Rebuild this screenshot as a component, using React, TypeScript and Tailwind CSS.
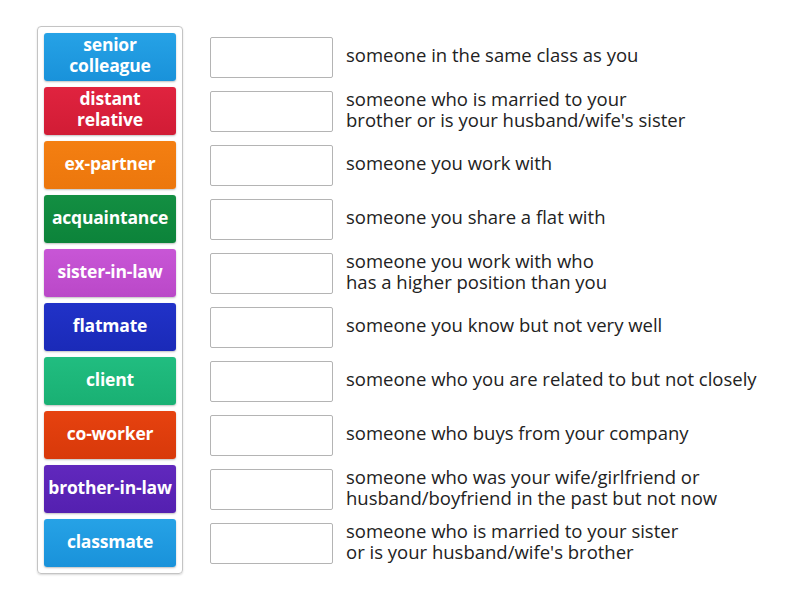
import React from "react";

const tiles: { label: string[]; cls: string }[] = [
  { label: ["senior", "colleague"], cls: "bg-gradient-to-b from-[#26a2e6] to-[#1992da]" },
  { label: ["distant", "relative"], cls: "bg-gradient-to-b from-[#e0233f] to-[#d11c35]" },
  { label: ["ex-partner"], cls: "bg-gradient-to-b from-[#f47f11] to-[#ec770d]" },
  { label: ["acquaintance"], cls: "bg-gradient-to-b from-[#138f42] to-[#0c833a]" },
  { label: ["sister-in-law"], cls: "bg-gradient-to-b from-[#c856d6] to-[#ba48c8]" },
  { label: ["flatmate"], cls: "bg-gradient-to-b from-[#2132c8] to-[#1a2ab8]" },
  { label: ["client"], cls: "bg-gradient-to-b from-[#21bd80] to-[#19b073]" },
  { label: ["co-worker"], cls: "bg-gradient-to-b from-[#e6420f] to-[#d8390a]" },
  { label: ["brother-in-law"], cls: "bg-gradient-to-b from-[#6128bd] to-[#5420b0]" },
  { label: ["classmate"], cls: "bg-gradient-to-b from-[#26a2e6] to-[#1992da]" },
];

const defs: string[][] = [
  ["someone in the same class as you"],
  ["someone who is married to your", "brother or is your husband/wife's sister"],
  ["someone you work with"],
  ["someone you share a flat with"],
  ["someone you work with who", "has a higher position than you"],
  ["someone you know but not very well"],
  ["someone who you are related to but not closely"],
  ["someone who buys from your company"],
  ["someone who was your wife/girlfriend or", "husband/boyfriend in the past but not now"],
  ["someone who is married to your sister", "or is your husband/wife's brother"],
];

export default function App() {
  return (
    <div
      className="w-[800px] h-[600px] bg-white flex items-start"
      style={{ fontFamily: '"Open Sans", "Noto Sans", sans-serif' }}
    >
      <div className="ml-[37px] mt-[26px] border border-[#c4c4c4] rounded-[4px] p-[6px] flex flex-col gap-[6px] shadow-[0_1px_2px_rgba(0,0,0,0.15)]">
        {tiles.map((t) => (
          <div
            key={t.label.join(" ")}
            className={`w-[132px] h-[48px] pb-[4px] rounded-[3px] flex flex-col items-center justify-center text-center text-white font-bold text-[17.5px] leading-[21px] tracking-[-0.2px] whitespace-nowrap shadow-[0_1px_2px_rgba(0,0,0,0.25)] ${t.cls}`}
          >
            {t.label.map((l) => (
              <span key={l}>{l}</span>
            ))}
          </div>
        ))}
      </div>
      <div className="ml-[27px] mt-[30px] flex flex-col">
        {defs.map((d, i) => (
          <div key={i} className="h-[54px] flex items-center">
            <div className="w-[123px] h-[41px] border border-[#b4b4b4] rounded-[2px] bg-white shrink-0" />
            <div className="ml-[13px] mb-[5px] text-[18.5px] leading-[21px] text-[#222] whitespace-nowrap">
              {d.map((l, j) => (
                <div key={j}>{l}</div>
              ))}
            </div>
          </div>
        ))}
      </div>
    </div>
  );
}
